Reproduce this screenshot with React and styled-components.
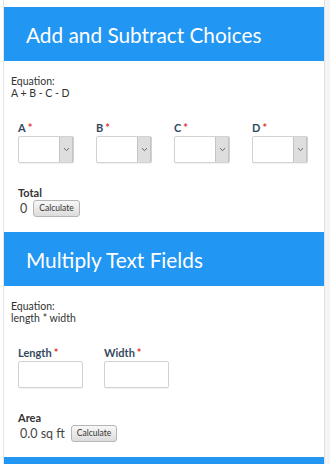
import React from 'react';
import styled, { createGlobalStyle } from 'styled-components';

const GlobalStyle = createGlobalStyle`
  html, body {
    margin: 0;
    padding: 0;
    background: #ffffff;
  }
  body {
    font-family: Lato, "Open Sans", sans-serif;
    color: #333;
  }
`;

const Page = styled.div`
  display: flex;
  height: 464px;
  overflow: hidden;
  padding-left: 3px;
`;

const Gutter = styled.div`
  flex: 1;
  background: #f4f4f4;
`;

const Container = styled.div`
  width: 320px;
  border-left: 1px solid #e6e6e6;
  border-right: 1px solid #e2e2e2;
  background: #fff;
`;

const Section = styled.section`
  padding-top: 7px;
  padding-bottom: 8px;
`;

const Header = styled.h2`
  margin: 0;
  height: 54px;
  display: flex;
  align-items: center;
  padding-left: 22px;
  background: #2196f3;
  color: #fff;
  font-weight: 400;
  font-size: 20.8px;
`;

const Body = styled.div`
  padding: 14px 7px 0 7px;
`;

const Equation = styled.div`
  font-size: 10.5px;
  line-height: 12px;
  color: #333;
`;

const Fields = styled.div`
  display: flex;
  gap: ${p => p.gap}px;
  padding-left: 7px;
  margin-top: 22px;
`;

const Field = styled.div`
  display: flex;
  flex-direction: column;
`;

const Label = styled.label`
  font-size: 11px;
  font-weight: 700;
  line-height: 13px;
  color: #34495e;
  margin-bottom: 2px;
`;

const Req = styled.span`
  color: #e53935;
  margin-left: 2px;
`;

const SelectBox = styled.div`
  display: flex;
  width: 56px;
  height: 27px;
  box-sizing: border-box;
  border: 1px solid #d2d2d2;
  border-radius: 2px;
  background: #fff;
  box-shadow: 0 1px 1px rgba(0, 0, 0, 0.06);
`;

const SelectValue = styled.div`
  flex: 1;
`;

const Arrow = styled.div`
  width: 12px;
  display: flex;
  align-items: center;
  justify-content: center;
  background: #dedede;
  border-left: 1px solid #c4c4c4;
  border-right: 1px solid #c4c4c4;
`;

const TextInput = styled.input`
  width: 65px;
  height: 27px;
  box-sizing: border-box;
  border: 1px solid #d2d2d2;
  border-radius: 2px;
  background: #fff;
  box-shadow: 0 1px 1px rgba(0, 0, 0, 0.06);
  padding: 0 4px;
`;

const Result = styled.div`
  padding-left: 7px;
  margin-top: 23px;
`;

const ResultLabel = styled.div`
  font-size: 11px;
  font-weight: 700;
  line-height: 13px;
  color: #333;
`;

const ResultRow = styled.div`
  display: flex;
  align-items: center;
  gap: 6px;
  margin-top: 1px;
  padding-left: 2px;
`;

const Value = styled.span`
  font-size: 12.5px;
  color: #444;
`;

const Button = styled.button`
  height: 17px;
  padding: 0 5px;
  font-family: Lato, "Open Sans", sans-serif;
  font-size: 8.5px;
  color: #333;
  border: 1px solid #b5b5b5;
  border-radius: 3px;
  background: linear-gradient(#f8f8f8, #dcdcdc);
  line-height: 15px;
`;

const Chevron = () => (
  <svg width="7" height="5" viewBox="0 0 7 5">
    <path d="M1 1.2 L3.5 3.6 L6 1.2" fill="none" stroke="#666" strokeWidth="1" />
  </svg>
);

const Select = ({ label }) => (
  <Field>
    <Label>{label}<Req>*</Req></Label>
    <SelectBox>
      <SelectValue />
      <Arrow><Chevron /></Arrow>
    </SelectBox>
  </Field>
);

const Input = ({ label }) => (
  <Field>
    <Label>{label}<Req>*</Req></Label>
    <TextInput type="text" />
  </Field>
);

export default function App() {
  return (
    <>
      <GlobalStyle />
      <Page>
        <Container>
          <Section>
            <Header>Add and Subtract Choices</Header>
            <Body>
              <Equation>Equation:<br />A + B - C - D</Equation>
              <Fields gap={22}>
                <Select label="A" />
                <Select label="B" />
                <Select label="C" />
                <Select label="D" />
              </Fields>
              <Result>
                <ResultLabel>Total</ResultLabel>
                <ResultRow>
                  <Value>0</Value>
                  <Button>Calculate</Button>
                </ResultRow>
              </Result>
            </Body>
          </Section>
          <Section>
            <Header>Multiply Text Fields</Header>
            <Body>
              <Equation>Equation:<br />length * width</Equation>
              <Fields gap={21}>
                <Input label="Length" />
                <Input label="Width" />
              </Fields>
              <Result>
                <ResultLabel>Area</ResultLabel>
                <ResultRow>
                  <Value>0.0 sq ft</Value>
                  <Button>Calculate</Button>
                </ResultRow>
              </Result>
            </Body>
          </Section>
          <Section>
            <Header />
          </Section>
        </Container>
        <Gutter />
      </Page>
    </>
  );
}
